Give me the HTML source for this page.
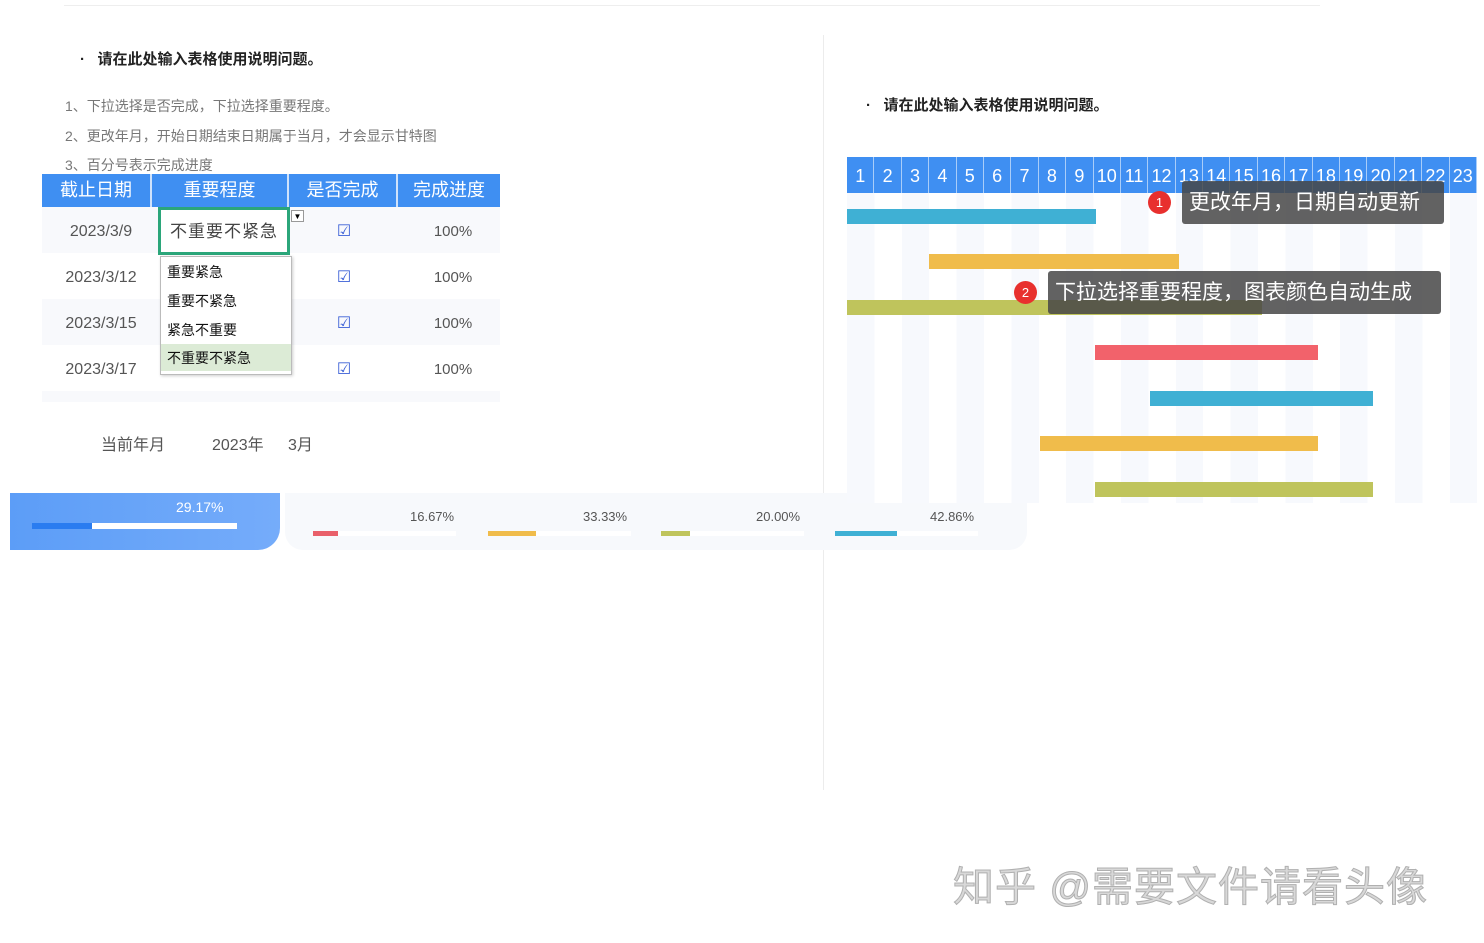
<!DOCTYPE html>
<html><head><meta charset="utf-8"><style>
*{margin:0;padding:0;box-sizing:border-box}
body{width:1484px;height:943px;background:#fff;position:relative;overflow:hidden;font-family:"Liberation Sans","Noto Sans CJK SC",sans-serif}
.a{position:absolute}
.t{font-size:14px;color:#777;white-space:nowrap}
.hd{background:#3f8ff2;color:#fff;font-size:18px;text-align:center;line-height:33px;border-right:2px solid #cfe2fb}
.cell{font-size:16px;color:#555;text-align:center;line-height:50px}
.bar{position:absolute;height:15px}
.gh{display:flex}
.gh div{width:27.4px;height:36px;background:#3f8ff2;color:#fff;font-size:18px;line-height:38px;text-align:center;border-right:1px solid #a9cdf9;overflow:hidden}
.tip{position:absolute;background:rgba(70,70,70,.85);color:#fff;font-size:21px;border-radius:3px;padding-left:7px;line-height:43px;white-space:nowrap}
.dot{position:absolute;width:23px;height:23px;border-radius:50%;background:#e8302e;color:#fff;font-size:13px;text-align:center;line-height:23px}
</style></head><body>
<div class="a" style="left:64px;top:5px;width:1256px;height:1px;background:#eee"></div>
<div class="a" style="left:823px;top:35px;width:1px;height:755px;background:#ececec"></div>

<div class="a" style="left:80px;top:48px;font-size:15px;font-weight:bold;color:#222">·&nbsp;&nbsp;&nbsp;请在此处输入表格使用说明问题。</div>
<div class="a t" style="left:65px;top:96px">1、下拉选择是否完成，下拉选择重要程度。</div>
<div class="a t" style="left:65px;top:126px">2、更改年月，开始日期结束日期属于当月，才会显示甘特图</div>
<div class="a t" style="left:65px;top:155px">3、百分号表示完成进度</div>

<div class="a" style="left:42px;top:174px;width:458px;height:228px;background:#fff">
 <div class="a hd" style="left:0;top:0;width:110px">截止日期</div>
 <div class="a hd" style="left:110px;top:0;width:137px">重要程度</div>
 <div class="a hd" style="left:247px;top:0;width:109px">是否完成</div>
 <div class="a hd" style="left:356px;top:0;width:102px;border:0">完成进度</div>
 <div class="a" style="left:0;top:33px;width:458px;height:46px;background:#f8f9fc"></div>
 <div class="a" style="left:0;top:125px;width:458px;height:46px;background:#f8f9fc"></div>
 <div class="a" style="left:0;top:217px;width:458px;height:11px;background:#f8f9fc"></div>
</div>
<div class="a cell" style="left:42px;top:207px;width:118px">2023/3/9</div>
<div class="a cell" style="left:42px;top:253px;width:118px">2023/3/12</div>
<div class="a cell" style="left:42px;top:299px;width:118px">2023/3/15</div>
<div class="a cell" style="left:42px;top:345px;width:118px">2023/3/17</div>
<div class="a cell" style="left:290px;top:207px;width:108px;color:#3a5fd6">☑</div>
<div class="a cell" style="left:290px;top:253px;width:108px;color:#3a5fd6">☑</div>
<div class="a cell" style="left:290px;top:299px;width:108px;color:#3a5fd6">☑</div>
<div class="a cell" style="left:290px;top:345px;width:108px;color:#3a5fd6">☑</div>
<div class="a cell" style="left:408px;top:207px;width:90px;font-size:15px">100%</div>
<div class="a cell" style="left:408px;top:253px;width:90px;font-size:15px">100%</div>
<div class="a cell" style="left:408px;top:299px;width:90px;font-size:15px">100%</div>
<div class="a cell" style="left:408px;top:345px;width:90px;font-size:15px">100%</div>
<div class="a" style="left:158px;top:207px;width:132px;height:48px;border:3px solid #2ba67a;background:#fff;font-size:17px;color:#444;text-align:center;line-height:44px;letter-spacing:1px">不重要不紧急</div>
<div class="a" style="left:291px;top:210px;width:13px;height:12px;border:1px solid #999;background:#fff;font-size:8px;text-align:center;line-height:11px">▼</div>
<div class="a" style="left:160px;top:256px;width:132px;height:119px;background:#fff;border:1px solid #bbb;box-shadow:1px 1px 3px rgba(0,0,0,.2);font-size:14px;color:#111">
 <div style="padding-left:6px;line-height:31px;height:29px">重要紧急</div>
 <div style="padding-left:6px;line-height:31px;height:29px">重要不紧急</div>
 <div style="padding-left:6px;line-height:31px;height:29px">紧急不重要</div>
 <div style="padding-left:6px;line-height:28px;height:27px;background:#dcebd6">不重要不紧急</div>
</div>
<div class="a" style="left:101px;top:431px;font-size:16px;color:#555">当前年月</div>
<div class="a" style="left:212px;top:431px;font-size:16px;color:#555">2023年</div>
<div class="a" style="left:288px;top:431px;font-size:16px;color:#555">3月</div>

<div class="a" style="left:10px;top:493px;width:270px;height:57px;background:linear-gradient(90deg,#5c9df7,#75acfa);border-radius:0 0 22px 0"></div>
<div class="a" style="left:176px;top:499px;font-size:14px;color:#fff">29.17%</div>
<div class="a" style="left:32px;top:523px;width:205px;height:6px;background:#fff"></div>
<div class="a" style="left:32px;top:523px;width:60px;height:6px;background:#2a7cf0"></div>
<div class="a" style="left:285px;top:493px;width:742px;height:57px;background:#f7f9fc;border-radius:0 0 18px 18px"></div>
<div class="a" style="left:410px;top:509px;font-size:13px;color:#555">16.67%</div>
<div class="a" style="left:583px;top:509px;font-size:13px;color:#555">33.33%</div>
<div class="a" style="left:756px;top:509px;font-size:13px;color:#555">20.00%</div>
<div class="a" style="left:930px;top:509px;font-size:13px;color:#555">42.86%</div>
<div class="a" style="left:313px;top:531px;width:143px;height:5px;background:#fff"></div><div class="a" style="left:313px;top:531px;width:25px;height:5px;background:#e9606a"></div>
<div class="a" style="left:488px;top:531px;width:143px;height:5px;background:#fff"></div><div class="a" style="left:488px;top:531px;width:48px;height:5px;background:#f0bc4b"></div>
<div class="a" style="left:661px;top:531px;width:143px;height:5px;background:#fff"></div><div class="a" style="left:661px;top:531px;width:29px;height:5px;background:#bfc45c"></div>
<div class="a" style="left:835px;top:531px;width:143px;height:5px;background:#fff"></div><div class="a" style="left:835px;top:531px;width:62px;height:5px;background:#3fb0d4"></div>

<div class="a" style="left:866px;top:94px;font-size:15px;font-weight:bold;color:#222">·&nbsp;&nbsp;&nbsp;请在此处输入表格使用说明问题。</div>
<div class="a" style="left:847px;top:193px;width:637px;height:310px;background:repeating-linear-gradient(90deg,#f7f9fd 0,#f7f9fd 27.4px,#fff 27.4px,#fff 54.8px)"></div>
<div class="a gh" style="left:847px;top:157px;width:637px;overflow:hidden">
<div>1</div><div>2</div><div>3</div><div>4</div><div>5</div><div>6</div><div>7</div><div>8</div><div>9</div><div>10</div><div>11</div><div>12</div><div>13</div><div>14</div><div>15</div><div>16</div><div>17</div><div>18</div><div>19</div><div>20</div><div>21</div><div>22</div><div>23</div>
</div>
<div class="bar" style="left:847px;top:209px;width:249px;background:#3fb0d4"></div>
<div class="bar" style="left:929px;top:254px;width:250px;background:#f0bc4b"></div>
<div class="bar" style="left:847px;top:300px;width:415px;background:#bfc45c"></div>
<div class="bar" style="left:1095px;top:345px;width:223px;background:#f2626b"></div>
<div class="bar" style="left:1150px;top:391px;width:223px;background:#3fb0d4"></div>
<div class="bar" style="left:1040px;top:436px;width:278px;background:#f0bc4b"></div>
<div class="bar" style="left:1095px;top:482px;width:278px;background:#bfc45c"></div>
<div class="tip" style="left:1182px;top:181px;width:262px">更改年月，日期自动更新</div>
<div class="dot" style="left:1148px;top:191px">1</div>
<div class="tip" style="left:1048px;top:271px;width:393px">下拉选择重要程度，图表颜色自动生成</div>
<div class="dot" style="left:1014px;top:281px">2</div>

<div class="a" style="left:953px;top:853px;font-size:41px;letter-spacing:1px;color:#d8d8d8;-webkit-text-stroke:1px #b0b0b0;white-space:nowrap">知乎 @需要文件请看头像</div>
</body></html>
